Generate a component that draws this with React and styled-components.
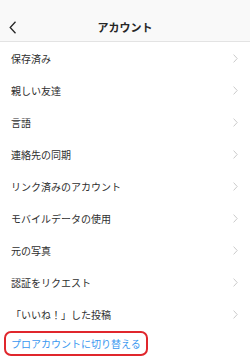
import React from "react";
import styled, { createGlobalStyle } from "styled-components";

const Global = createGlobalStyle`
  html, body { margin: 0; padding: 0; background: #fff; }
  body { font-family: "Noto Sans CJK JP", "Noto Sans", sans-serif; }
`;

const Page = styled.div`
  width: 250px;
  height: 364px;
  overflow: hidden;
  background: #fff;
`;

const Header = styled.div`
  height: 42px;
  background: #f9f9f9;
  border-bottom: 1px solid #e3e3e3;
  display: grid;
  grid-template-columns: 40px 1fr 40px;
  align-items: end;
  padding-bottom: 5px;
  box-sizing: border-box;
`;

const Back = styled.div`
  display: flex;
  align-items: center;
  padding-left: 9px;
  height: 18px;
`;

const Title = styled.div`
  text-align: center;
  font-size: 11px;
  font-weight: 700;
  color: #262626;
  line-height: 18px;
`;

const List = styled.div`
  display: flex;
  flex-direction: column;
`;

const Row = styled.div`
  height: 32px;
  display: flex;
  align-items: center;
  justify-content: space-between;
  padding: 0 12px 0 11px;
  font-size: 10px;
  color: #2e2e2e;
`;

const ProWrap = styled.div`
  padding: 1px 0 0 4px;
`;

const ProBox = styled.div`
  width: 144px;
  height: 25px;
  box-sizing: border-box;
  border: 2.5px solid #e0262c;
  border-radius: 7px;
  display: flex;
  align-items: center;
  padding-left: 5px;
  font-size: 10px;
  color: #3897f0;
`;

const Chevron = () => (
  <svg width="5" height="9" viewBox="0 0 5 9">
    <path d="M0.6 0.6 L4.2 4.5 L0.6 8.4" fill="none" stroke="#c4c4c4" strokeWidth="0.9" />
  </svg>
);

const items = [
  "保存済み",
  "親しい友達",
  "言語",
  "連絡先の同期",
  "リンク済みのアカウント",
  "モバイルデータの使用",
  "元の写真",
  "認証をリクエスト",
  "「いいね！」した投稿",
];

export default function App() {
  return (
    <Page>
      <Global />
      <Header>
        <Back>
          <svg width="8" height="13" viewBox="0 0 8 13">
            <path d="M6.5 0.8 L1.2 6.5 L6.5 12.2" fill="none" stroke="#262626" strokeWidth="1.3" />
          </svg>
        </Back>
        <Title>アカウント</Title>
        <div />
      </Header>
      <List>
        {items.map((t) => (
          <Row key={t}>
            <span>{t}</span>
            <Chevron />
          </Row>
        ))}
      </List>
      <ProWrap>
        <ProBox>プロアカウントに切り替える</ProBox>
      </ProWrap>
    </Page>
  );
}
